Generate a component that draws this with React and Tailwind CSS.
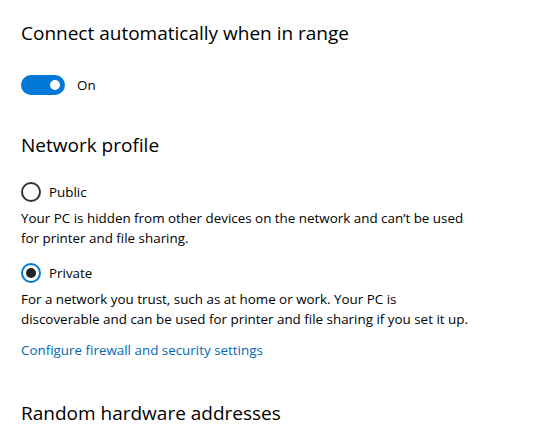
export default function App() {
  return (
    <div className="w-[540px] h-[445px] bg-white overflow-hidden pl-[21px] text-black font-['Open_Sans','Noto_Sans',sans-serif]">
      <h2 className="mt-[19px] text-[19px] leading-[28px]">Connect automatically when in range</h2>

      <div className="mt-[28px] flex items-center h-5">
        <div className="w-[44px] h-5 rounded-full bg-[#0078d7] flex items-center justify-end pr-[5px]">
          <div className="w-[10px] h-[10px] rounded-full bg-white" />
        </div>
        <span className="ml-3 text-[13.4px] leading-5">On</span>
      </div>

      <h2 className="mt-[36px] text-[19px] leading-[28px]">Network profile</h2>

      <div className="mt-[23px] flex items-center h-5">
        <div className="w-5 h-5 rounded-full border-2 border-[#333]" />
        <span className="ml-2 text-[13.4px] leading-5">Public</span>
      </div>
      <p className="mt-[6px] text-[13.4px] leading-5 whitespace-nowrap">
        Your PC is hidden from other devices on the network and can’t be used
        <br />
        for printer and file sharing.
      </p>

      <div className="mt-[15px] flex items-center h-5">
        <div className="w-5 h-5 rounded-full border-2 border-[#0078d7] flex items-center justify-center">
          <div className="w-[10px] h-[10px] rounded-full bg-[#222]" />
        </div>
        <span className="ml-2 text-[13.4px] leading-5">Private</span>
      </div>
      <p className="mt-[6px] text-[13.4px] leading-5 whitespace-nowrap">
        For a network you trust, such as at home or work. Your PC is
        <br />
        discoverable and can be used for printer and file sharing if you set it up.
      </p>

      <a className="block mt-[11px] text-[13.4px] leading-5 text-[#0067b8]">Configure firewall and security settings</a>

      <h2 className="mt-[39px] text-[19px] leading-[28px]">Random hardware addresses</h2>
    </div>
  );
}
